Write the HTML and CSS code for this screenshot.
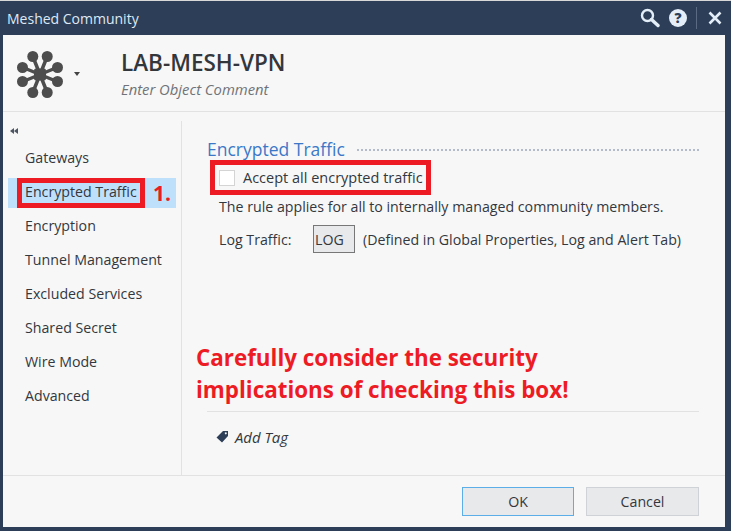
FILE: index.html
```html
<!DOCTYPE html>
<html lang="en">

<head>
    <meta charset="utf-8">
    <meta name="viewport" content="width=device-width, initial-scale=1.0">
    <title>Meshed Community</title>

    <link rel="stylesheet" href="styles.css">
</head>

<body>
    <div class="window">
        <header class="titlebar">
            <span class="titlebar-name">Meshed Community</span>
            <div class="titlebar-icons">
                <svg class="icon-search" width="20" height="20" viewBox="0 0 20 20">
                    <circle cx="7.5" cy="7.5" r="5.5" fill="none" stroke="#e4eef8" stroke-width="2.4"/>
                    <path d="M11.5 11.5 L18 17.5" stroke="#e4eef8" stroke-width="3.4" stroke-linecap="round"/>
                </svg>
                <span class="icon-help">?</span>
                <span class="titlebar-sep"></span>
                <svg class="icon-close" width="14" height="14" viewBox="0 0 14 14">
                    <path d="M1.5 1.5 L12.5 12.5 M12.5 1.5 L1.5 12.5" stroke="#e4eef8" stroke-width="2.6"/>
                </svg>
            </div>
        </header>

        <div class="content">
            <section class="object-head">
                <svg class="mesh-logo" width="46" height="47" viewBox="0 0 46 47">
                    <g stroke="#4d4d4d" stroke-width="3.5">
                        <path d="M23 23.5 L15.8 5.5 M23 23.5 L30.2 5.5 M23 23.5 L6 16.5 M23 23.5 L40 16.5 M23 23.5 L6 30.5 M23 23.5 L40 30.5 M23 23.5 L15.8 41.5 M23 23.5 L30.2 41.5"/>
                    </g>
                    <g fill="#4d4d4d">
                        <circle cx="15.8" cy="5.5" r="5.5"/>
                        <circle cx="30.2" cy="5.5" r="5.5"/>
                        <circle cx="5.5" cy="16.5" r="5.5"/>
                        <circle cx="40.5" cy="16.5" r="5.5"/>
                        <circle cx="5.5" cy="30.5" r="5.5"/>
                        <circle cx="40.5" cy="30.5" r="5.5"/>
                        <circle cx="15.8" cy="41.5" r="5.5"/>
                        <circle cx="30.2" cy="41.5" r="5.5"/>
                        <rect x="17" y="17.5" width="12" height="12" rx="2"/>
                    </g>
                </svg>
                <span class="caret"></span>
                <div class="object-text">
                    <h1>LAB-MESH-VPN</h1>
                    <p>Enter Object Comment</p>
                </div>
            </section>

            <div class="columns">
                <nav class="sidebar">
                    <div class="collapse">
                        <span></span><span></span>
                    </div>
                    <a class="nav-item">Gateways</a>
                    <a class="nav-item valgt"><span class="nav-mark">Encrypted Traffic</span><b class="step">1.</b></a>
                    <a class="nav-item">Encryption</a>
                    <a class="nav-item">Tunnel Management</a>
                    <a class="nav-item">Excluded Services</a>
                    <a class="nav-item">Shared Secret</a>
                    <a class="nav-item">Wire Mode</a>
                    <a class="nav-item">Advanced</a>
                </nav>

                <main class="panel">
                    <div class="panel-title">
                        <h2>Encrypted Traffic</h2>
                        <span class="dots"></span>
                    </div>

                    <label class="accept">
                        <span class="checkbox"></span>
                        <span class="accept-text">Accept all encrypted traffic</span>
                    </label>

                    <p class="rule">The rule applies for all to internally managed community members.</p>

                    <div class="log-row">
                        <span class="log-label">Log Traffic:</span>
                        <span class="log-box">LOG</span>
                        <span>(Defined in Global Properties, Log and Alert Tab)</span>
                    </div>

                    <p class="warning">Carefully consider the security<br>implications of checking this box!</p>

                    <div class="tags">
                        <svg width="13" height="13" viewBox="0 0 13 13">
                            <path d="M7 1 H12 V6 L6 12.5 L0.5 7.5 Z M9.8 2.2 a1 1 0 1 0 0.01 0 Z" fill="#2c3e58" fill-rule="evenodd"/>
                        </svg>
                        <em>Add Tag</em>
                    </div>
                </main>
            </div>

            <footer class="buttons">
                <button class="btn btn-ok">OK</button>
                <button class="btn">Cancel</button>
            </footer>
        </div>
    </div>
</body>

</html>
```

FILE: styles.css
```css
* {
    box-sizing: border-box;
}

html,
body {
    margin: 0;
    padding: 0;
}

body {
    width: 731px;
    height: 531px;
    overflow: hidden;
    font-family: "Open Sans", "Noto Sans", sans-serif;
    font-size: 14.2px;
    color: #33373e;
}

.window {
    display: flex;
    flex-direction: column;
    height: 531px;
    background-color: #2c3e58;
    border-top: 1px solid #d8d8d8;
    padding: 0 6px 4px 3px;
}

/* titlebar */
.titlebar {
    display: flex;
    align-items: center;
    justify-content: space-between;
    height: 34px;
    flex: none;
}

.titlebar-name {
    margin-left: 4px;
    color: #dfe9f4;
    font-size: 14px;
}

.titlebar-icons {
    display: flex;
    align-items: center;
}

.icon-search {
    margin-right: 9px;
}

.icon-help {
    width: 18px;
    height: 18px;
    border-radius: 50%;
    background-color: #e4eef8;
    color: #2c3e58;
    font-size: 14px;
    font-weight: 800;
    line-height: 18px;
    text-align: center;
}

.titlebar-sep {
    width: 1px;
    height: 22px;
    margin: 0 11px 0 9px;
    background-color: #5a6a80;
}

.icon-close {
    margin-right: 3px;
}

/* white area */
.content {
    flex: 1;
    display: flex;
    flex-direction: column;
    background-color: #f7f7f7;
}

.object-head {
    display: flex;
    align-items: center;
    height: 77px;
    flex: none;
    padding-left: 14px;
    border-bottom: 1px solid #e2e2e2;
}

.mesh-logo {
    margin-top: 2px;
}

.caret {
    width: 0;
    height: 0;
    margin: 2px 0 0 11px;
    border: 3px solid transparent;
    border-top: 4px solid #444;
    border-bottom: none;
}

.object-text {
    margin-left: 41px;
}

h1 {
    margin: 2px 0 0;
    font-size: 22.5px;
    font-weight: 600;
    line-height: 28px;
    color: #33363b;
}

.object-text p {
    margin: 2px 0 0;
    font-size: 14.8px;
    font-style: italic;
    line-height: 20px;
    color: #6f7378;
}

.columns {
    flex: 1;
    display: flex;
    padding-top: 9px;
}

/* sidebar */
.sidebar {
    width: 179px;
    flex: none;
    border-right: 1px solid #e2e2e2;
    padding-left: 5px;
    padding-right: 5px;
}

.collapse {
    display: flex;
    height: 23px;
    padding: 7px 0 0 2px;
}

.collapse span {
    width: 0;
    height: 0;
    border: 3px solid transparent;
    border-left: none;
    border-right: 4px solid #4d5563;
}

.nav-item {
    display: flex;
    align-items: center;
    height: 30px;
    margin-bottom: 4px;
    padding-left: 17px;
    padding-bottom: 4px;
    white-space: nowrap;
}

.valgt {
    padding-left: 9px;
    padding-bottom: 0;
    background-color: #bfe0fb;
}

.nav-mark {
    display: flex;
    align-items: center;
    width: 128px;
    height: 30px;
    padding-left: 3px;
    padding-bottom: 4px;
    border: 5px solid #ed1c24;
}

.step {
    margin-left: 8px;
    color: #ed1c24;
    font-size: 21px;
    font-weight: 700;
}

/* right panel */
.panel {
    flex: 1;
    padding: 0 26px 0 25px;
}

.panel-title {
    display: flex;
    align-items: center;
    margin-top: 16px;
}

h2 {
    margin: 0;
    font-size: 17.5px;
    font-weight: 400;
    line-height: 24px;
    color: #3b78c8;
    white-space: nowrap;
}

.dots {
    flex: 1;
    margin: 1px 0 0 12px;
    border-top: 2px dotted #b4bccb;
}

.accept {
    display: flex;
    align-items: center;
    width: 221px;
    height: 35px;
    margin: -1px 0 0 3px;
    padding-left: 4px;
    border: 5px solid #ed1c24;
    white-space: nowrap;
}

.accept-text {
    font-size: 14.5px;
}

.checkbox {
    width: 16px;
    height: 16px;
    margin-right: 8px;
    background-color: #fff;
    border: 1px solid #d4d4d4;
}

.rule {
    margin: 1px 0 0 12px;
    line-height: 22px;
}

.log-row {
    display: flex;
    align-items: center;
    height: 28px;
    margin: 7px 0 0 12px;
    white-space: nowrap;
}

.log-label {
    width: 94px;
}

.log-box {
    display: flex;
    align-items: center;
    width: 42px;
    height: 28px;
    margin-right: 8px;
    padding-left: 1px;
    background-color: #e8e9ea;
    border: 1px solid #777;
}

.warning {
    margin: 89px 0 0 -11px;
    color: #ed1c24;
    font-size: 22.4px;
    font-weight: 700;
    line-height: 32px;
    white-space: nowrap;
}

.tags {
    display: flex;
    align-items: center;
    gap: 6px;
    height: 50px;
    margin-top: 5px;
    padding-left: 9px;
    border-top: 1px solid #e2e2e2;
}

.tags em {
    font-size: 14.9px;
}

/* ok cancel */
.buttons {
    display: flex;
    justify-content: flex-end;
    gap: 12px;
    height: 52px;
    flex: none;
    padding: 11px 26px 0 0;
    border-top: 1px solid #e2e2e2;
}

.btn {
    width: 113px;
    height: 29px;
    font-family: inherit;
    font-size: 14.2px;
    color: #33373e;
    background-color: #e8e9eb;
    border: 1px solid #cfd2d6;
}

.btn-ok {
    width: 112px;
    border-color: #5caee8;
}
```
